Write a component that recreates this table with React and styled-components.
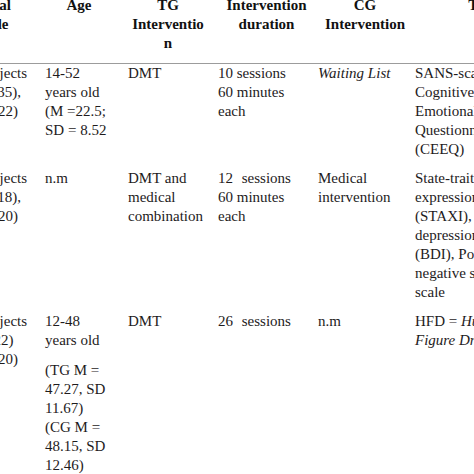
import React from 'react';
import styled, { createGlobalStyle } from 'styled-components';

const GlobalStyle = createGlobalStyle`
  html, body {
    margin: 0;
    padding: 0;
    background: #ffffff;
    overflow: hidden;
  }
`;

const Viewport = styled.div`
  width: 474px;
  height: 474px;
  overflow: hidden;
  background: #ffffff;
`;

const Table = styled.table`
  table-layout: fixed;
  border-collapse: collapse;
  border-spacing: 0;
  margin: -4px 0 0 -40px;
  width: 605px;
  font-family: 'Liberation Serif', 'Times New Roman', serif;
  font-size: 15px;
  line-height: 19px;
  color: #1e1b1c;
`;

const HeadCell = styled.th`
  vertical-align: top;
  text-align: center;
  font-weight: bold;
  color: #111111;
  padding: 0 ${(p) => p.$pad}px 10px 0;
  border-bottom: 1px solid #9c9c9c;
  white-space: nowrap;
`;

const Cell = styled.td`
  vertical-align: top;
  text-align: left;
  padding: 0 0 10px ${(p) => p.$indent || 0}px;
  white-space: nowrap;
`;

const Paragraph = styled.div`
  & + & {
    margin-top: 11px;
  }
`;

const Line = styled.span`
  display: block;
  word-spacing: ${(p) => (p.$spread ? '5px' : 'normal')};
`;

const Italic = styled.i`
  font-style: italic;
`;

const columns = [
  { width: 85, pad: 33, head: ['Clinical', 'sample'] },
  { width: 83, pad: 15, head: ['Age'] },
  { width: 90, pad: 10, head: ['TG', 'Interventio', 'n'] },
  { width: 100, pad: 3, head: ['Intervention', 'duration'] },
  { width: 97, pad: 3, head: ['CG', 'Intervention'] },
  { width: 150, pad: 10, head: ['Tools'] },
];

const rows = [
  [
    [['57 subjects', '(TG =35),', '(CG =22)']],
    [['14-52', 'years old', '(M =22.5;', 'SD = 8.52']],
    [['DMT']],
    [['10 sessions', '60 minutes', 'each']],
    [[<Italic key="w">Waiting List</Italic>]],
    [['SANS-scale,', 'Cognitive', 'Emotional', 'Questionnaire', '(CEEQ)']],
  ],
  [
    [['38 subjects', '(TG =18),', '(CG =20)']],
    [['n.m']],
    [['DMT and', 'medical', 'combination']],
    [[{ text: '12 sessions', spread: true }, '60 minutes', 'each']],
    [['Medical', 'intervention']],
    [
      [
        'State-trait anger',
        'expression inventory',
        '(STAXI), Beck',
        'depression inventory',
        '(BDI), Positive and',
        'negative syndrome',
        'scale',
      ],
    ],
  ],
  [
    [['42 subjects', '(TG=22)', '(CG =20)']],
    [
      ['12-48', 'years old'],
      ['(TG M =', '47.27, SD', '11.67)', '(CG M =', '48.15, SD', '12.46)'],
    ],
    [['DMT']],
    [[{ text: '26 sessions', spread: true }]],
    [['n.m']],
    [
      [
        <React.Fragment key="h">
          HFD = <Italic>Human</Italic>
        </React.Fragment>,
        <Italic key="f">Figure Drawing</Italic>,
      ],
    ],
  ],
];

const renderLine = (line, i) => {
  if (line && line.text) {
    return (
      <Line key={i} $spread={line.spread}>
        {line.text}
      </Line>
    );
  }
  return <Line key={i}>{line}</Line>;
};

const App = () => {
  return (
    <Viewport>
      <GlobalStyle />
      <Table>
        <colgroup>
          {columns.map((col, i) => (
            <col key={i} style={{ width: col.width }} />
          ))}
        </colgroup>
        <thead>
          <tr>
            {columns.map((col, i) => (
              <HeadCell key={i} $pad={col.pad}>
                {col.head.map(renderLine)}
              </HeadCell>
            ))}
          </tr>
        </thead>
        <tbody>
          {rows.map((row, r) => (
            <tr key={r}>
              {row.map((cell, c) => (
                <Cell key={c}>
                  {cell.map((para, p) => (
                    <Paragraph key={p}>{para.map(renderLine)}</Paragraph>
                  ))}
                </Cell>
              ))}
            </tr>
          ))}
        </tbody>
      </Table>
    </Viewport>
  );
};

export default App;
